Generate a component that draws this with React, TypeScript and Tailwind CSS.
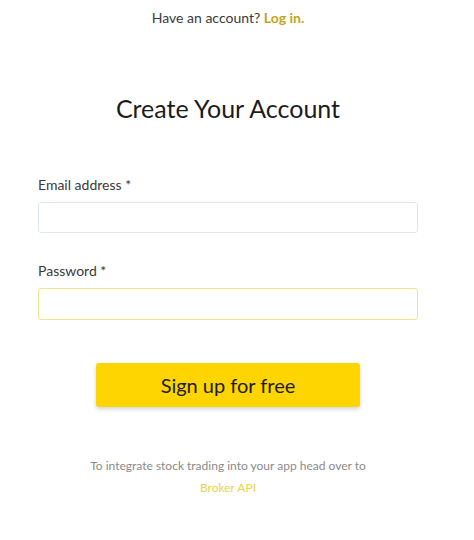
export default function App() {
  return (
    <div className="min-h-[540px] bg-white" style={{ fontFamily: 'Lato, "Liberation Sans", sans-serif' }}>
      <div className="w-[456px] flex flex-col items-center">
        <p className="mt-[8px] h-[20px] text-[14px] leading-[20px] text-[#3a3a3a]">
          Have an account? <a className="font-bold text-[#bfa51c]">Log in.</a>
        </p>

        <h1 className="mt-[62px] h-[36px] text-[25px] leading-[36px] text-[#1c1c1c]">Create Your Account</h1>

        <form className="w-full px-[38px] mt-[49px] flex flex-col">
          <label className="h-[20px] text-[14px] leading-[20px] text-[#3a3a3a]">Email address *</label>
          <input
            type="email"
            className="mt-[7px] h-[31px] w-full rounded-[3px] border border-[#dde8f2] bg-white outline-none"
          />
          <label className="mt-[28px] h-[20px] text-[14px] leading-[20px] text-[#3a3a3a]">Password *</label>
          <input
            type="password"
            className="mt-[7px] h-[32px] w-full rounded-[3px] border border-[#f3e58a] bg-white outline-none"
          />
          <button
            type="button"
            className="mt-[43px] mx-auto h-[44px] w-[264px] rounded-[3px] bg-[#fed500] text-[20px] text-[#1c1c1c] shadow-[0_2px_4px_rgba(0,0,0,0.18)]"
          >
            Sign up for free
          </button>
        </form>

        <p className="mt-[48px] text-[12px] leading-[22px] text-[#8a8a8a]">
          To integrate stock trading into your app head over to
        </p>
        <a className="text-[12px] leading-[22px] text-[#e9d24a]">Broker API</a>
      </div>
    </div>
  );
}
